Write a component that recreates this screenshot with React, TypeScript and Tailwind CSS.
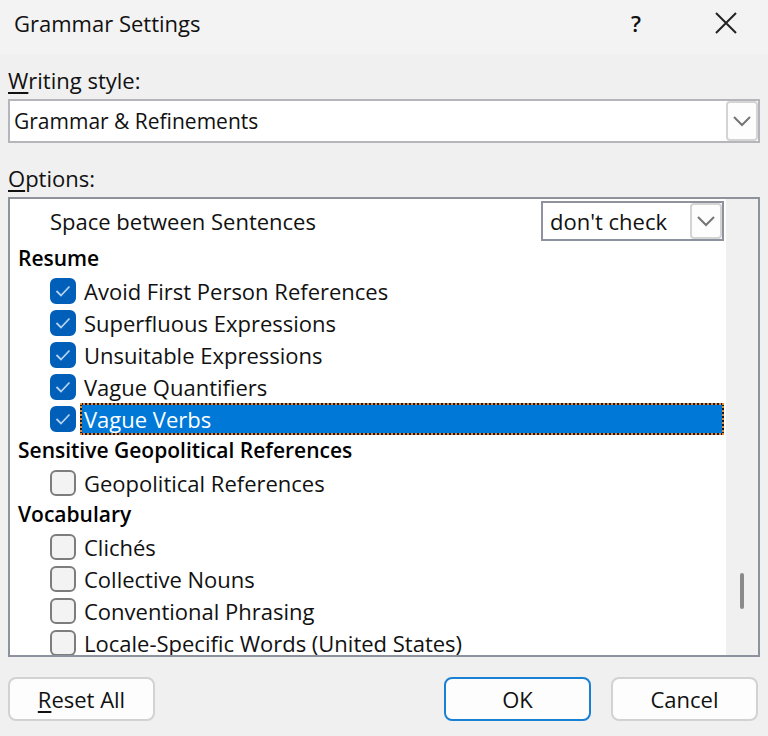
import { ReactNode, useState } from 'react';
import { cva } from 'class-variance-authority';
import clsx from 'clsx';

interface Option {
	label: string;
	checked: boolean;
}

interface OptionGroup {
	title: string;
	options: Option[];
}

const initialGroups: OptionGroup[] = [
	{
		title: 'Resume',
		options: [
			{ label: 'Avoid First Person References', checked: true },
			{ label: 'Superfluous Expressions', checked: true },
			{ label: 'Unsuitable Expressions', checked: true },
			{ label: 'Vague Quantifiers', checked: true },
			{ label: 'Vague Verbs', checked: true },
		],
	},
	{
		title: 'Sensitive Geopolitical References',
		options: [{ label: 'Geopolitical References', checked: false }],
	},
	{
		title: 'Vocabulary',
		options: [
			{ label: 'Clichés', checked: false },
			{ label: 'Collective Nouns', checked: false },
			{ label: 'Conventional Phrasing', checked: false },
			{ label: 'Locale-Specific Words (United States)', checked: false },
		],
	},
];

function Chevron() {
	return (
		<svg width="18" height="12" viewBox="0 0 18 12" fill="none" stroke="#757575" strokeWidth="2" aria-hidden="true">
			<path d="M1 2 L9 10 L17 2" />
		</svg>
	);
}

interface DropdownProps {
	id: string;
	options: string[];
	className?: string;
}

function Dropdown({ id, options, className }: DropdownProps) {
	return (
		<div className={clsx('relative border-2 bg-white', className)}>
			<select id={id} className="h-full w-full appearance-none bg-transparent outline-none">
				{options.map((option) => (
					<option key={option}>{option}</option>
				))}
			</select>
			{/* Arrow button sits over the right end of the select */}
			<span className="pointer-events-none absolute inset-y-0 right-0 flex w-8 items-center justify-center rounded-sm border-2 border-[#d4d4d4] bg-[#fdfdfd]">
				<Chevron />
			</span>
		</div>
	);
}

interface CheckRowProps {
	option: Option;
	selected: boolean;
	onSelect: () => void;
	onToggle: () => void;
}

function CheckRow({ option, selected, onSelect, onToggle }: CheckRowProps) {
	return (
		<label className="flex h-8 items-center gap-1 pl-10" onClick={onSelect}>
			<span className="grid shrink-0 place-items-center">
				<input
					type="checkbox"
					checked={option.checked}
					onChange={onToggle}
					className="col-start-1 row-start-1 size-[26px] appearance-none rounded-md border-2 border-[#7d7d7d] bg-[#f3f3f3] checked:border-[#005fb8] checked:bg-[#005fb8]"
				/>
				{option.checked && (
					<svg
						className="pointer-events-none col-start-1 row-start-1"
						width="16"
						height="12"
						viewBox="0 0 16 12"
						fill="none"
						stroke="#b4d3ee"
						strokeWidth="1.8"
						aria-hidden="true"
					>
						<path d="M1.5 6 L6 10.5 L14.5 1.5" />
					</svg>
				)}
			</span>
			<span
				className={clsx(
					'mr-0.5 flex h-8 flex-1 items-center border-2 pl-0.5 whitespace-nowrap',
					selected
						? 'border-dotted border-[#e08a3c] text-white [background:linear-gradient(#0078d7,#0078d7)_padding-box,linear-gradient(#1a1a1a,#1a1a1a)_border-box]'
						: 'border-transparent'
				)}
			>
				{option.label}
			</span>
		</label>
	);
}

const dialogButton = cva('h-11 w-[147px] rounded-lg border-2 bg-[#fdfdfd] text-center', {
	variants: {
		intent: {
			default: 'border-[#1a80d4]',
			normal: 'border-[#d2d2d2]',
		},
	},
	defaultVariants: { intent: 'normal' },
});

interface DialogButtonProps {
	intent?: 'default' | 'normal';
	className?: string;
	onClick?: () => void;
	children: ReactNode;
}

function DialogButton({ intent, className, onClick, children }: DialogButtonProps) {
	return (
		<button type="button" onClick={onClick} className={clsx(dialogButton({ intent }), className)}>
			{children}
		</button>
	);
}

// Underlined access key
function Key({ children }: { children: ReactNode }) {
	return <span className="underline decoration-2 underline-offset-3">{children}</span>;
}

export default function App() {
	const [groups, setGroups] = useState(initialGroups);
	const [selected, setSelected] = useState('Vague Verbs');

	const toggle = (label: string) => {
		setGroups((current) =>
			current.map((group) => ({
				...group,
				options: group.options.map((option) =>
					option.label === label ? { ...option, checked: !option.checked } : option
				),
			}))
		);
	};

	return (
		<div className="flex min-h-screen flex-col bg-[#f0f0f0] font-['Open_Sans','Noto_Sans',sans-serif] text-[22px] leading-8 text-[#111]">
			<header className="flex h-[54px] items-center bg-[#f3f3f3] pr-7 pb-2 pl-3.5">
				<h1 className="flex-1">Grammar Settings</h1>
				<button type="button" aria-label="Help" className="mr-15 w-8 text-center font-semibold">
					?
				</button>
				<button type="button" aria-label="Close" className="flex w-7 justify-center">
					<svg width="22" height="22" viewBox="0 0 22 22" fill="none" stroke="#222" strokeWidth="2" aria-hidden="true">
						<path d="M1 1 L21 21 M21 1 L1 21" />
					</svg>
				</button>
			</header>

			<main className="flex flex-1 flex-col px-2 pt-2.5 pb-3.5">
				<label htmlFor="writing-style">
					<Key>W</Key>riting style:
				</label>
				<Dropdown
					id="writing-style"
					options={['Grammar & Refinements', 'Grammar']}
					className="mt-[3px] h-11 border-[#b4b6bc] pl-1 text-[21px]"
				/>

				<h2 id="options-label" className="mt-[19px]">
					<Key>O</Key>ptions:
				</h2>
				<div
					role="group"
					aria-labelledby="options-label"
					className="mt-[3px] flex h-[460px] overflow-hidden border-2 border-[#8e929c] bg-white"
				>
					<div className="flex-1">
						<div className="flex h-11 items-center pl-10">
							<label htmlFor="sentence-space" className="flex-1">
								Space between Sentences
							</label>
							<Dropdown
								id="sentence-space"
								options={["don't check", '1', '2']}
								className="mr-0.5 h-10 w-[183px] border-[#8e929c] pl-[7px]"
							/>
						</div>
						{groups.map((group) => (
							<fieldset key={group.title}>
								<legend className="h-8 pl-2 text-[21px] leading-[30px] font-semibold text-black">{group.title}</legend>
								{group.options.map((option) => (
									<CheckRow
										key={option.label}
										option={option}
										selected={selected === option.label}
										onSelect={() => setSelected(option.label)}
										onToggle={() => toggle(option.label)}
									/>
								))}
							</fieldset>
						))}
					</div>
					{/* Scrollbar gutter with thin thumb */}
					<div className="flex w-8 flex-col items-center justify-end bg-[#f0f0f0] pb-[46px]">
						<div className="h-9 w-1 rounded-full bg-[#8b8b8b]" />
					</div>
				</div>

				<footer className="mt-5 flex pr-0.5">
					<DialogButton onClick={() => setGroups(initialGroups)}>
						<Key>R</Key>eset All
					</DialogButton>
					<DialogButton intent="default" className="mr-5 ml-auto">
						OK
					</DialogButton>
					<DialogButton>Cancel</DialogButton>
				</footer>
			</main>
		</div>
	);
}
